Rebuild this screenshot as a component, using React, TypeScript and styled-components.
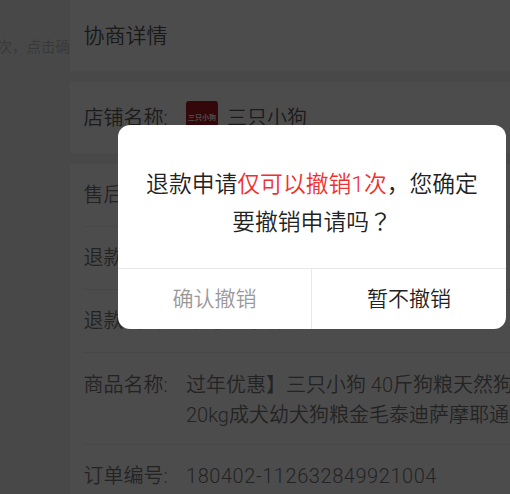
import styled, { createGlobalStyle } from "styled-components"

const GlobalStyle = createGlobalStyle`
    html, body {
        margin: 0;
        padding: 0;
        background: #fff;
    }
    #root {
        width: 510px;
        height: 494px;
        overflow: hidden;
    }
`

const rows = [
    { label: "售后类型:", value: "仅退款" },
    { label: "退款原因:", value: "其他" },
    { label: "退款说明:", value: "不想要了协商退款" },
]

export default function App() {
    return (
        <Page>
            <GlobalStyle />
            <SidePeek>
                <PeekText>次，点击确</PeekText>
            </SidePeek>
            <Panel>
                <Header>协商详情</Header>
                <Section>
                    <StoreRow>
                        <Label $strong>店铺名称:</Label>
                        <StoreLogo>三只小狗</StoreLogo>
                        <StoreName>三只小狗</StoreName>
                    </StoreRow>
                </Section>
                <Section>
                    {rows.map((row) => (
                        <Row key={row.label}>
                            <Label>{row.label}</Label>
                            <Value>{row.value}</Value>
                        </Row>
                    ))}
                    <TallRow>
                        <Label>商品名称:</Label>
                        <Value>
                            过年优惠】三只小狗 40斤狗粮天然狗粮
                            <br />
                            20kg成犬幼犬狗粮金毛泰迪萨摩耶通用
                        </Value>
                    </TallRow>
                    <Row>
                        <Label>订单编号:</Label>
                        <OrderNumber>180402-112632849921004</OrderNumber>
                    </Row>
                </Section>
            </Panel>
            <Overlay>
                <Dialog>
                    <Message>
                        退款申请<Warn>仅可以撤销1次</Warn>，您确定要撤销申请吗<Question>？</Question>
                    </Message>
                    <Actions>
                        <ActionButton $muted>确认撤销</ActionButton>
                        <ActionButton>暂不撤销</ActionButton>
                    </Actions>
                </Dialog>
            </Overlay>
        </Page>
    )
}

const Page = styled.div`
    position: relative;
    display: flex;
    width: 510px;
    height: 494px;
    overflow: hidden;
    background: #f0f0f0;
    font-family: Roboto, "Noto Sans CJK SC", sans-serif;
    font-weight: 350;
`

const SidePeek = styled.div`
    display: flex;
    justify-content: flex-end;
    flex: 0 0 70px;
    padding-top: 38px;
    overflow: hidden;
    box-sizing: border-box;
`

const PeekText = styled.span`
    flex: none;
    height: 20px;
    font-size: 14.5px;
    line-height: 20px;
    white-space: nowrap;
    color: #bdbdbd;
`

const Panel = styled.div`
    display: flex;
    flex-direction: column;
    flex: 1;
    min-width: 0;
    gap: 11px;
    overflow: hidden;
`

const Header = styled.div`
    flex: none;
    height: 71px;
    padding: 1px 0 0 13.5px;
    box-sizing: border-box;
    font-size: 21px;
    line-height: 70px;
    color: #555;
    background: #fff;
`

const Section = styled.div`
    flex: none;
    padding-left: 13.5px;
    background: #fff;
`

const StoreRow = styled.div`
    display: flex;
    align-items: center;
    height: 71px;
`

const Row = styled.div`
    display: flex;
    align-items: center;
    height: 63px;
    border-bottom: 1px solid #eee;
    box-sizing: border-box;
    white-space: nowrap;
`

const TallRow = styled(Row)`
    align-items: flex-start;
    height: 92px;
    padding-top: 17px;
`

const Label = styled.span<{ $strong?: boolean }>`
    flex: 0 0 102.5px;
    font-size: 20px;
    line-height: 30px;
    color: ${({ $strong }) => ($strong ? "#5c5c5c" : "#777")};
`

const Value = styled.span`
    font-size: 20px;
    line-height: 30px;
    color: #777;
`

const OrderNumber = styled(Value)`
    letter-spacing: 0.56px;
`

const StoreLogo = styled.div`
    display: flex;
    align-items: center;
    justify-content: center;
    width: 32px;
    height: 32px;
    border-radius: 3px;
    margin: -2px 9px 0 0;
    font-size: 7px;
    font-weight: 700;
    white-space: nowrap;
    color: #fff;
    background: #b01a22;
`

const StoreName = styled.span`
    font-size: 20px;
    line-height: 30px;
    color: #5c5c5c;
`

const Overlay = styled.div`
    position: absolute;
    inset: 0;
    display: flex;
    align-items: flex-start;
    justify-content: flex-end;
    padding: 125px 4px 0 0;
    box-sizing: border-box;
    background: rgba(0, 0, 0, 0.7);
`

const Dialog = styled.div`
    width: 388px;
    height: 204px;
    display: flex;
    flex-direction: column;
    border-radius: 12px;
    overflow: hidden;
    background: #fff;
`

const Message = styled.div`
    flex: 1;
    padding: 42px 24px 0;
    font-size: 22.8px;
    line-height: 36px;
    text-align: center;
    color: #222;
`

const Warn = styled.span`
    color: #f03030;
`

const Question = styled.span`
    font-family: "Noto Sans CJK TC", sans-serif;
`

const Actions = styled.div`
    display: grid;
    grid-template-columns: 193px 1fr;
    flex: 0 0 60px;
    border-top: 1px solid #e8e8e8;
`

const ActionButton = styled.div<{ $muted?: boolean }>`
    font-size: 21px;
    line-height: 60px;
    text-align: center;
    color: ${({ $muted }) => ($muted ? "#999" : "#222")};
    & + & {
        border-left: 1px solid #e8e8e8;
    }
`
